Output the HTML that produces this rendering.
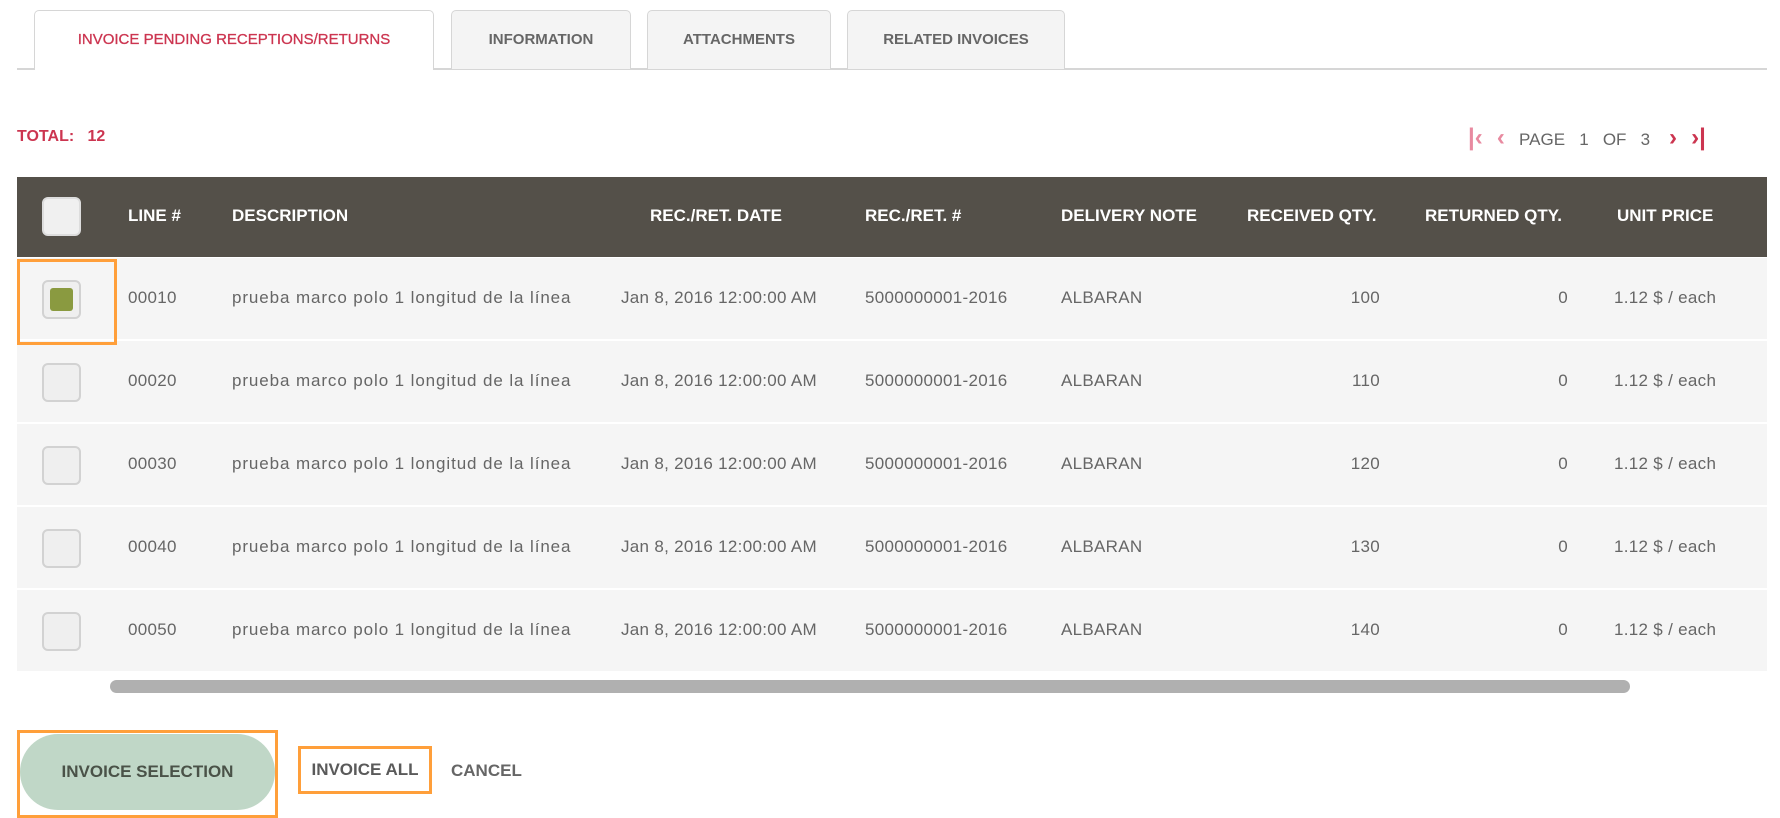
<!DOCTYPE html>
<html><head><meta charset="utf-8"><style>
*{box-sizing:border-box;margin:0;padding:0}
body{width:1780px;height:818px;background:#fff;position:relative;overflow:hidden;font-family:"Liberation Sans",sans-serif;color:#555}
.a{position:absolute;white-space:nowrap}
.tab{position:absolute;top:10px;height:59px;border:1px solid #d6d6d6;border-bottom:none;border-radius:5px 5px 0 0;background:#f4f4f4;font-size:15px;font-weight:bold;color:#666;text-align:center;line-height:58px}
.tab.act{background:#fff;color:#cc3550;height:60px;font-weight:normal;-webkit-text-stroke:.3px #cc3550}
.row{position:absolute;left:17px;width:1750px;height:81px;background:#f5f5f5}
.cb{position:absolute;left:25px;width:39px;height:39px;border:2px solid #d2d2d2;border-radius:6px;background:#efefef}
.t{position:absolute;font-size:17px;color:#666;white-space:nowrap;letter-spacing:.3px}
.d{letter-spacing:.9px}
.h{position:absolute;font-size:17px;font-weight:bold;color:#fff;white-space:nowrap;top:29px}
.pg{font-size:24px;font-weight:bold}
</style></head><body>
<div class="a" style="left:17px;top:68px;width:1750px;height:2px;background:#d6d6d6"></div>
<div class="tab act" style="left:34px;width:400px">INVOICE PENDING RECEPTIONS/RETURNS</div>
<div class="tab" style="left:451px;width:180px">INFORMATION</div>
<div class="tab" style="left:647px;width:184px">ATTACHMENTS</div>
<div class="tab" style="left:847px;width:218px">RELATED INVOICES</div>

<div class="a" style="left:17px;top:128px;font-size:16px;font-weight:bold;color:#cc3550">TOTAL:&nbsp;&nbsp; 12</div>
<div class="a" style="left:1468px;top:124px;font-size:17px;color:#666">
<span class="pg" style="color:#e88aa0">|‹</span>&nbsp;&nbsp;&nbsp;<span class="pg" style="color:#e88aa0">‹</span>&nbsp;&nbsp;&nbsp;PAGE&nbsp;&nbsp; 1&nbsp;&nbsp; OF&nbsp;&nbsp; 3&nbsp;&nbsp;&nbsp; <span class="pg" style="color:#cc3550">›</span>&nbsp;&nbsp;&nbsp;<span class="pg" style="color:#cc3550">›|</span></div>

<div class="a" style="left:17px;top:177px;width:1750px;height:80px;background:#545049">
<div class="cb" style="top:20px;background:#f0f0f0;border-color:#ddd"></div>
<div class="h" style="left:111px">LINE #</div>
<div class="h" style="left:215px">DESCRIPTION</div>
<div class="h" style="left:633px">REC./RET. DATE</div>
<div class="h" style="left:848px">REC./RET. #</div>
<div class="h" style="left:1044px">DELIVERY NOTE</div>
<div class="h" style="left:1230px">RECEIVED QTY.</div>
<div class="h" style="left:1408px">RETURNED QTY.</div>
<div class="h" style="left:1600px">UNIT PRICE</div>
</div>

<div class="row" style="top:258px"><div class="cb" style="top:22px"><div style="position:absolute;left:6px;top:6px;width:23px;height:23px;background:#8a9a40;border-radius:3px"></div></div><div class="t" style="left:111px;top:30px">00010</div><div class="t d" style="left:215px;top:30px">prueba marco polo 1 longitud de la línea</div><div class="t" style="left:604px;top:30px">Jan 8, 2016 12:00:00 AM</div><div class="t" style="left:848px;top:30px">5000000001-2016</div><div class="t" style="left:1044px;top:30px">ALBARAN</div><div class="t" style="right:387px;top:30px">100</div><div class="t" style="right:199px;top:30px">0</div><div class="t" style="left:1597px;top:30px">1.12 $ / each</div></div>
<div class="row" style="top:341px"><div class="cb" style="top:22px"></div><div class="t" style="left:111px;top:30px">00020</div><div class="t d" style="left:215px;top:30px">prueba marco polo 1 longitud de la línea</div><div class="t" style="left:604px;top:30px">Jan 8, 2016 12:00:00 AM</div><div class="t" style="left:848px;top:30px">5000000001-2016</div><div class="t" style="left:1044px;top:30px">ALBARAN</div><div class="t" style="right:387px;top:30px">110</div><div class="t" style="right:199px;top:30px">0</div><div class="t" style="left:1597px;top:30px">1.12 $ / each</div></div>
<div class="row" style="top:424px"><div class="cb" style="top:22px"></div><div class="t" style="left:111px;top:30px">00030</div><div class="t d" style="left:215px;top:30px">prueba marco polo 1 longitud de la línea</div><div class="t" style="left:604px;top:30px">Jan 8, 2016 12:00:00 AM</div><div class="t" style="left:848px;top:30px">5000000001-2016</div><div class="t" style="left:1044px;top:30px">ALBARAN</div><div class="t" style="right:387px;top:30px">120</div><div class="t" style="right:199px;top:30px">0</div><div class="t" style="left:1597px;top:30px">1.12 $ / each</div></div>
<div class="row" style="top:507px"><div class="cb" style="top:22px"></div><div class="t" style="left:111px;top:30px">00040</div><div class="t d" style="left:215px;top:30px">prueba marco polo 1 longitud de la línea</div><div class="t" style="left:604px;top:30px">Jan 8, 2016 12:00:00 AM</div><div class="t" style="left:848px;top:30px">5000000001-2016</div><div class="t" style="left:1044px;top:30px">ALBARAN</div><div class="t" style="right:387px;top:30px">130</div><div class="t" style="right:199px;top:30px">0</div><div class="t" style="left:1597px;top:30px">1.12 $ / each</div></div>
<div class="row" style="top:590px"><div class="cb" style="top:22px"></div><div class="t" style="left:111px;top:30px">00050</div><div class="t d" style="left:215px;top:30px">prueba marco polo 1 longitud de la línea</div><div class="t" style="left:604px;top:30px">Jan 8, 2016 12:00:00 AM</div><div class="t" style="left:848px;top:30px">5000000001-2016</div><div class="t" style="left:1044px;top:30px">ALBARAN</div><div class="t" style="right:387px;top:30px">140</div><div class="t" style="right:199px;top:30px">0</div><div class="t" style="left:1597px;top:30px">1.12 $ / each</div></div>

<div class="a" style="left:17px;top:259px;width:100px;height:86px;border:3px solid #ff9f3a"></div>
<div class="a" style="left:110px;top:680px;width:1520px;height:13px;background:#b0b0b0;border-radius:7px"></div>

<div class="a" style="left:20px;top:734px;width:255px;height:76px;background:#c0d7c7;border-radius:38px;font-size:17px;font-weight:bold;color:#4a5248;text-align:center;line-height:76px">INVOICE SELECTION</div>
<div class="a" style="left:17px;top:730px;width:261px;height:88px;border:3px solid #ff9f3a"></div>
<div class="a" style="left:298px;top:746px;width:134px;height:48px;border:3px solid #ff9f3a;font-size:17px;font-weight:bold;color:#5a5a5a;text-align:center;line-height:42px">INVOICE ALL</div>
<div class="a" style="left:451px;top:761px;font-size:17px;font-weight:bold;color:#666">CANCEL</div>
</body></html>
